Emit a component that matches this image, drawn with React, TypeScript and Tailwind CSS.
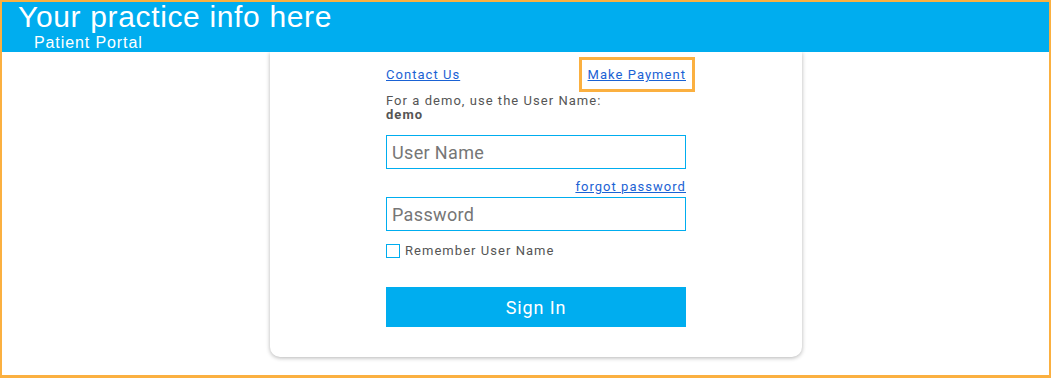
export default function App() {
  return (
    <div className="h-[378px] w-[1051px] overflow-hidden border-[#fbb040] border-x-2 border-t-2 border-b-[3px] bg-white">
      {/* Header */}
      <header className="relative z-10 h-[50px] bg-[#00adef] font-['Liberation_Sans',Arial,sans-serif] text-white">
        <h1 className="pl-[16px] text-[30px] leading-[29px] tracking-[0.65px]">Your practice info here</h1>
        <p className="mt-[3px] pl-[32px] text-[16px] leading-[18px] tracking-[0.9px]">Patient Portal</p>
      </header>

      {/* Login card */}
      <div className="ml-[268px] w-[532px] rounded-b-[10px] bg-white pt-[15px] pb-[30px] shadow-[0_1px_4px_rgba(0,0,0,0.3)] font-['Roboto',sans-serif]">
        <div className="mx-auto w-[300px] text-[13px] tracking-[0.08em] text-[#555]">
          <div className="flex items-center justify-between leading-[15px]">
            <a href="#" className="text-[#1a62d4] underline">Contact Us</a>
            <span className="relative">
              <a href="#" className="text-[#1a62d4] underline">Make Payment</a>
              <span className="absolute -left-[9px] -right-[9px] -top-[10px] -bottom-[10px] border-[3px] border-[#fbb040]" />
            </span>
          </div>
          <p className="mt-[12px] leading-[14px]">For a demo, use the User Name:</p>
          <p className="font-bold leading-[14px]">demo</p>

          <input
            type="text"
            placeholder="User Name"
            className="mt-[13px] block h-[34px] w-full border border-[#00adef] px-[5px] text-[18px] tracking-[0.02em] text-[#333] placeholder-[#767676] outline-none"
          />
          <div className="mt-[10px] flex justify-end leading-[15px]">
            <a href="#" className="text-[#1a62d4] underline">forgot password</a>
          </div>
          <input
            type="password"
            placeholder="Password"
            className="mt-[3px] block h-[34px] w-full border border-[#00adef] px-[5px] text-[18px] tracking-[0.02em] text-[#333] placeholder-[#767676] outline-none"
          />
          <label className="mt-[12px] flex items-center gap-[5px] leading-[15px]">
            <span className="h-[14px] w-[14px] border border-[#00adef] bg-white" />
            <span>Remember User Name</span>
          </label>

          <button className="mt-[29px] block h-[40px] w-full bg-[#00adef] text-[18px] tracking-[0.05em] text-white">
            Sign In
          </button>
        </div>
      </div>
    </div>
  );
}
